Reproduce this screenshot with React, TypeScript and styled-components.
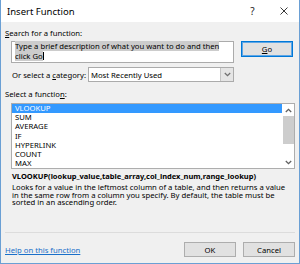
import React from 'react'
import styled, { createGlobalStyle } from 'styled-components'

const GlobalStyle = createGlobalStyle`
  html, body {
    margin: 0;
    padding: 0;
    background: #ffffff;
  }
  body {
    font-family: "Noto Sans", "Open Sans", sans-serif;
  }
`

const functions = ['VLOOKUP', 'SUM', 'AVERAGE', 'IF', 'HYPERLINK', 'COUNT', 'MAX']

const Chevron: React.FC<{ up?: boolean; color?: string }> = ({ up, color = '#606060' }) => (
  <svg width="7" height="5" viewBox="0 0 7 5">
    <polyline
      points={up ? '0.8,4 3.5,1.3 6.2,4' : '0.8,1 3.5,3.7 6.2,1'}
      fill="none"
      stroke={color}
      strokeWidth="1.3"
    />
  </svg>
)

const CloseIcon = () => (
  <svg width="8" height="8" viewBox="0 0 8 8">
    <path d="M0.5 0.5 L7.5 7.5 M7.5 0.5 L0.5 7.5" stroke="#222" strokeWidth="0.9" />
  </svg>
)

const App: React.FC = () => (
  <>
    <GlobalStyle />
    <Window>
      <TitleBar>
        <Title>Insert Function</Title>
        <TitleButtons>
          <TitleButton>?</TitleButton>
          <TitleButton>
            <CloseIcon />
          </TitleButton>
        </TitleButtons>
      </TitleBar>

      <Body>
        <Label>
          <u>S</u>earch for a function:
        </Label>
        <SearchRow>
          <SearchBox>
            <Selected>
              Type a brief description of what you want to do and then
              <br />
              click Go
            </Selected>
            <Caret />
          </SearchBox>
          <Button $default>
            <u>G</u>o
          </Button>
        </SearchRow>

        <CategoryRow>
          <CategoryLabel>
            Or select a <u>c</u>ategory:
          </CategoryLabel>
          <Select>
            <SelectValue>Most Recently Used</SelectValue>
            <SelectArrow>
              <Chevron color="#707070" />
            </SelectArrow>
          </Select>
        </CategoryRow>

        <ListLabel>
          Select a functio<u>n</u>:
        </ListLabel>
        <ListBox>
          <Items>
            {functions.map((name, i) => (
              <Item key={name} $selected={i === 0}>
                {name}
              </Item>
            ))}
          </Items>
          <ScrollBar>
            <ScrollArrow>
              <Chevron up />
            </ScrollArrow>
            <Thumb />
            <Track />
            <ScrollArrow>
              <Chevron />
            </ScrollArrow>
          </ScrollBar>
        </ListBox>

        <Signature>VLOOKUP(lookup_value,table_array,col_index_num,range_lookup)</Signature>
        <Description>
          Looks for a value in the leftmost column of a table, and then returns a value in the same row from
          a column you specify. By default, the table must be sorted in an ascending order.
        </Description>

        <Footer>
          <HelpLink href="#">Help on this function</HelpLink>
          <FooterButtons>
            <Button>OK</Button>
            <Button>Cancel</Button>
          </FooterButtons>
        </Footer>
      </Body>
    </Window>
  </>
)

const Window = styled.div`
  width: 300px;
  height: 264px;
  box-sizing: border-box;
  border: 1px solid #6a9fd4;
  border-top: none;
  display: flex;
  flex-direction: column;
  background: #f0f0f0;
  color: #000;
  font-size: 7.7px;
`

const TitleBar = styled.div`
  height: 22px;
  flex-shrink: 0;
  display: flex;
  align-items: center;
  background: #ffffff;
  padding-left: 6px;
`

const Title = styled.div`
  font-size: 9.5px;
  color: #000;
`

const TitleButtons = styled.div`
  margin-left: auto;
  display: flex;
  height: 100%;
`

const TitleButton = styled.div`
  width: 31px;
  height: 100%;
  display: flex;
  align-items: center;
  justify-content: center;
  font-size: 10px;
  color: #222;
`

const Body = styled.div`
  flex: 1;
  display: flex;
  flex-direction: column;
  padding: 0 0 0 4px;
`

const Label = styled.div`
  margin-top: 6px;
  line-height: 10px;
`

const SearchRow = styled.div`
  display: flex;
  align-items: flex-start;
  margin-top: 3px;
  padding-left: 6px;
`

const SearchBox = styled.div`
  width: 223px;
  height: 22px;
  box-sizing: border-box;
  border: 1px solid #ababab;
  background: #ffffff;
  padding: 0 3px;
  line-height: 9.5px;
  white-space: nowrap;
`

const Selected = styled.span`
  background: #cccccc;
`

const Caret = styled.span`
  display: inline-block;
  width: 1px;
  height: 8px;
  background: #000;
  vertical-align: -1px;
`

const Button = styled.div<{ $default?: boolean }>`
  width: 52px;
  height: ${(p) => (p.$default ? 16 : 15)}px;
  box-sizing: border-box;
  margin-left: 7px;
  display: flex;
  align-items: center;
  justify-content: center;
  background: #e1e1e1;
  border: 1px solid ${(p) => (p.$default ? '#0078d7' : '#adadad')};
  box-shadow: ${(p) => (p.$default ? 'inset 0 0 0 1px #5ea6e6' : 'none')};
`

const CategoryRow = styled.div`
  display: flex;
  align-items: center;
  margin-top: 4px;
  padding-left: 7px;
`

const CategoryLabel = styled.div`
  width: 76px;
`

const Select = styled.div`
  width: 146px;
  height: 15px;
  box-sizing: border-box;
  border: 1px solid #ababab;
  background: #ffffff;
  display: flex;
  align-items: center;
`

const SelectValue = styled.div`
  flex: 1;
  padding-left: 2px;
`

const SelectArrow = styled.div`
  width: 12px;
  height: 100%;
  display: flex;
  align-items: center;
  justify-content: center;
  background: #e5e5e5;
  border-left: 1px solid #c4c4c4;
`

const ListLabel = styled.div`
  margin-top: 7px;
  line-height: 10px;
`

const ListBox = styled.div`
  margin: 4px 0 0 6px;
  width: 284px;
  height: 66px;
  box-sizing: border-box;
  border: 1px solid #adadad;
  background: #ffffff;
  display: flex;
`

const Items = styled.ul`
  list-style: none;
  margin: 0;
  padding: 0;
  flex: 1;
`

const Item = styled.li<{ $selected?: boolean }>`
  height: 9.2px;
  line-height: 9.2px;
  padding-left: 3px;
  background: ${(p) => (p.$selected ? '#3399ff' : 'transparent')};
  color: ${(p) => (p.$selected ? '#ffffff' : '#000000')};
`

const ScrollBar = styled.div`
  width: 12px;
  display: flex;
  flex-direction: column;
  align-items: center;
  background: #ffffff;
`

const ScrollArrow = styled.div`
  height: 12px;
  width: 100%;
  display: flex;
  align-items: center;
  justify-content: center;
`

const Thumb = styled.div`
  width: 11px;
  height: 28px;
  background: #cdcdcd;
`

const Track = styled.div`
  flex: 1;
`

const Signature = styled.div`
  margin-top: 2px;
  padding-left: 7px;
  line-height: 10px;
  font-size: 7.5px;
  font-weight: bold;
`

const Description = styled.div`
  margin-top: 3px;
  padding: 0 9px 0 7px;
  line-height: 7.5px;
`

const Footer = styled.div`
  margin: auto 4px 0 0;
  height: 31px;
  box-sizing: border-box;
  border-top: 1px solid #dcdcdc;
  padding: 9px 0 6px;
  display: flex;
  align-items: center;
`

const HelpLink = styled.a`
  color: #1a6fc9;
  text-decoration: underline;
`

const FooterButtons = styled.div`
  margin-left: auto;
  display: flex;
`

export default App
